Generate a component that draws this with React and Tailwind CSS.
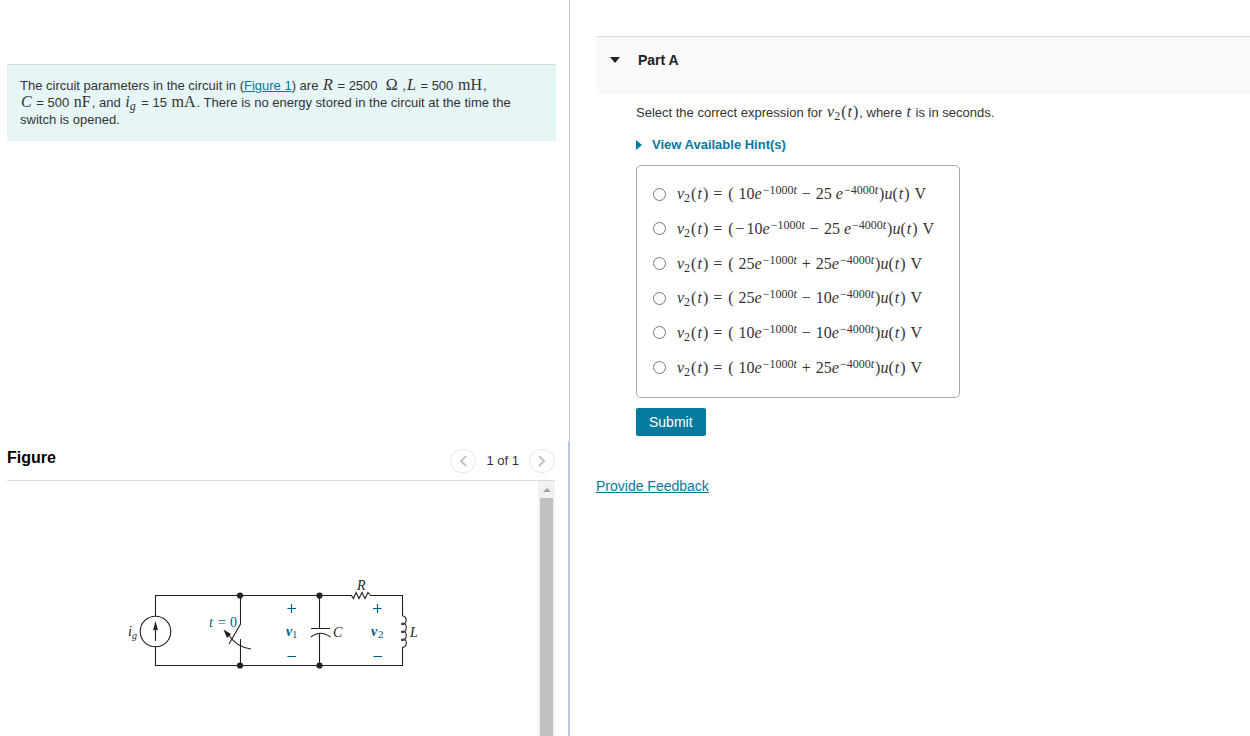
import { useState } from "react";

const sans = "font-['Liberation_Sans',Arial,sans-serif]";
const serif = "font-['Liberation_Serif','Times_New_Roman',serif]";

function M({ children, up = false }) {
  return (
    <span className={`${serif} mx-px text-base leading-none ${up ? "" : "italic"}`}>{children}</span>
  );
}

function Sub({ children }) {
  return <span className="mr-px align-[-3px] text-xs leading-[0]">{children}</span>;
}

function Exp({ children }) {
  return (
    <span className="ml-px align-[5px] text-xs leading-[0]">
      −{children}
      <i>t</i>
    </span>
  );
}

function Choice({ choice, checked, onChange }) {
  return (
    <label className="flex items-center gap-[11px]">
      <input
        type="radio"
        name="expression"
        value={choice.id}
        checked={checked}
        onChange={onChange}
        className="size-[13px] shrink-0 appearance-none rounded-full border border-[#767676] bg-white checked:border-4 checked:border-[#047a9c]"
      />
      <span className={`${serif} whitespace-nowrap text-base leading-5 text-[#333]`}>
        <i>v</i>
        <Sub>2</Sub>(<i className="mx-px">t</i>)<span className="mx-[5px]">=</span>
        <span className="ml-px">(</span>
        {choice.negative ? <span className="mx-[2px]">−</span> : <span className="ml-[5px]" />}
        {choice.a}
        <i>e</i>
        <Exp>1000</Exp>
        <span className="mx-[5px]">{choice.op}</span>
        {choice.b}
        <i className={choice.spaced ? "ml-1" : ""}>e</i>
        <Exp>4000</Exp>
        <span className="ml-px">)</span>
        <i>u</i>(<i className="mx-px">t</i>)<span className="ml-[5px]">V</span>
      </span>
    </label>
  );
}

const choices = [
  { id: "a", a: 10, op: "−", b: 25, spaced: true },
  { id: "b", a: 10, op: "−", b: 25, spaced: true, negative: true },
  { id: "c", a: 25, op: "+", b: 25 },
  { id: "d", a: 25, op: "−", b: 10 },
  { id: "e", a: 10, op: "−", b: 10 },
  { id: "f", a: 10, op: "+", b: 25 },
];

function PagerButton({ label, d }) {
  return (
    <button
      type="button"
      aria-label={label}
      className="flex h-6 w-[26px] items-center justify-center rounded-full border border-[#e6e6e6]"
    >
      <svg width="8" height="12" viewBox="0 0 8 12" fill="none" stroke="#c4c4c4" strokeWidth="2">
        <path d={d} />
      </svg>
    </button>
  );
}

function Circuit() {
  return (
    <svg
      width="310"
      height="110"
      viewBox="120 570 310 110"
      role="img"
      aria-label="Circuit diagram"
      className="shrink-0 font-['Liberation_Serif','Times_New_Roman',serif]"
    >
      <g fill="none" stroke="#231f20" strokeWidth="1.1">
        <path d="M155.5 616V595.5H351.5L353.5 598.5L356 592.5L359 598.5L362 592.5L365 598.5L368 592.5L370.5 595.5H402.5V616" />
        <path d="M155.5 647V665.5H402.5V647" />
        <circle cx="155.5" cy="631.5" r="15.3" />
        <path d="M155.5 641V626" />
        <path d="M240.5 595V624L229 644M240.5 639V665" />
        <path d="M228 634Q236 647 251 649" />
        <path d="M319.5 595V628.5M311 628.5H330M311 637Q320 629.5 330.5 637M319.5 633.5V665" />
        <path d="M402.5 616C407.500 616 407.500 625 402 624.5C401 623.5 402 623 403 623C407.500 623 407.500 632.5 402 632.5C401 631.5 402 631 403 631C407.500 631 407.500 640.5 402 640.5C401 639.5 402 639 403 639C407.500 639 407.500 647 402.500 647.500" />
      </g>
      <g fill="#231f20">
        <circle cx="240" cy="595.5" r="3.100" />
        <circle cx="240" cy="665.5" r="3.100" />
        <circle cx="319.500" cy="595.5" r="3.100" />
        <circle cx="319.500" cy="665.5" r="3.100" />
        <path d="M155.500 621L158 630.5L155.500 629.5L153 630.5Z" />
        <path d="M223.500 629.500L231 634L227 638Z" />
      </g>
      <g fill="#231f20" fontSize="14" fontStyle="italic">
        <text x="128" y="636">i</text>
        <text x="132" y="639" fontSize="10">g</text>
        <text x="357" y="590">R</text>
        <text x="333" y="637">C</text>
        <text x="410" y="637">L</text>
      </g>
      <g fill="#005f86" fontSize="14">
        <text x="209" y="627" fontStyle="italic">t</text>
        <text x="218" y="627">=</text>
        <text x="230" y="627">0</text>
        <text x="286" y="636" fontStyle="italic" fontWeight="bold">v</text>
        <text x="292" y="638" fontSize="11">1</text>
        <text x="371" y="636" fontStyle="italic" fontWeight="bold">v</text>
        <text x="378" y="638" fontSize="11">2</text>
      </g>
      <path
        d="M287.500 608.500H296M291.500 604V613M373 608.500H381.500M377.500 604V613M287.500 656.500H296M373.500 656.500H382"
        stroke="#005f86"
        strokeWidth="1.200"
        fill="none"
      />
    </svg>
  );
}

export default function App() {
  const [selected, setSelected] = useState(null);

  return (
    <div className={`flex h-screen overflow-hidden bg-white text-[13px] text-[#333] ${sans}`}>
      <div className="flex w-[45.6%] shrink-0 flex-col border-r border-[#b9c8da] pl-[7px]">
        <section className="mr-[13px] mt-16 border-t border-[#d6dcdc] bg-[#e6f6f6] pb-[13px] pl-[13px] pr-8 pt-3">
          <p className="leading-[17px]">
            The circuit parameters in the circuit in (
            <a href="#figure" className="text-[#047a9c] underline">Figure 1</a>) are{" "}
            <span className="whitespace-nowrap"><M>R</M> = 2500 &nbsp;<M up>Ω</M></span> ,
            <span className="whitespace-nowrap"><M>L</M> = 500 <M up>mH</M>,</span>
            <br />
            <span className="whitespace-nowrap"><M>C</M> = 500 <M up>nF</M></span>, and{" "}
            <span className="whitespace-nowrap">
              <M>i<Sub>g</Sub></M> = 15 <M up>mA</M>
            </span>
            . There is no energy stored in the circuit at the time the switch is opened.
          </p>
        </section>

        <section id="figure" className="mt-[300px] flex min-h-0 flex-1 flex-col border-r border-[#b9c8da] pr-[13px]">
          <header className="flex h-10 shrink-0 items-center justify-between border-b border-[#dcdcdc]">
            <h2 className="pb-1.5 text-base font-bold text-black">Figure</h2>
            <div className="flex items-center gap-2.5">
              <PagerButton label="Previous figure" d="M7 1L2 6L7 11" />
              <span>1 of 1</span>
              <PagerButton label="Next figure" d="M1 1L6 6L1 11" />
            </div>
          </header>
          <div className="flex min-h-0 flex-1 overflow-hidden">
            <div className="min-w-0 flex-1 overflow-hidden pl-[113px] pt-[89px]">
              <Circuit />
            </div>
            <div className="flex w-[17px] shrink-0 flex-col items-center bg-[#f1f1f1]">
              <div className="flex h-[17px] shrink-0 items-center">
                <svg width="8" height="4" viewBox="0 0 8 4" fill="#a0a0a0">
                  <path d="M0 4L4 0L8 4Z" />
                </svg>
              </div>
              <div className="w-[13px] flex-1 bg-[#c1c1c1]" />
            </div>
          </div>
        </section>
      </div>

      <main className="min-w-0 flex-1 pl-[26px] pt-9">
        <header className="h-[58px] border-t border-[#dcdcdc] bg-[#f9f9f9] pl-3.5 pt-[13px]">
          <button type="button" className="flex items-center gap-[18px] text-sm font-bold text-[#222]">
            <svg width="10" height="6" viewBox="0 0 10 6" fill="#222">
              <path d="M0 0H10L5 6Z" />
            </svg>
            Part A
          </button>
        </header>

        <div className="flex flex-col items-start pl-10 pt-2">
          <p className="leading-[22px]">
            Select the correct expression for{" "}
            <M up>
              <i>v</i>
              <Sub>2</Sub>(<i className="mx-px">t</i>)
            </M>
            , where <M>t</M> is in seconds.
          </p>
          <button type="button" className="mt-[11px] flex items-center gap-2.5 leading-5 font-bold text-[#047a9c]">
            <svg width="6" height="10" viewBox="0 0 6 10" fill="#047a9c">
              <path d="M0 0L6 5L0 10Z" />
            </svg>
            View Available Hint(s)
          </button>

          <fieldset
            aria-label="Expression"
            className="mt-2.5 w-[324px] rounded-[5px] border border-[#a6a8ab] pb-3 pl-4 pt-[11px]"
          >
            <div className="grid h-52 grid-rows-6">
              {choices.map((choice) => (
                <Choice
                  key={choice.id}
                  choice={choice}
                  checked={selected === choice.id}
                  onChange={() => setSelected(choice.id)}
                />
              ))}
            </div>
          </fieldset>

          <button type="button" className="mt-2.5 h-7 rounded-xs bg-[#047a9c] px-[13px] text-sm text-white">
            Submit
          </button>
        </div>

        <a href="#feedback" className="mt-10 inline-block text-sm text-[#047a9c] underline">
          Provide Feedback
        </a>
      </main>
    </div>
  );
}
